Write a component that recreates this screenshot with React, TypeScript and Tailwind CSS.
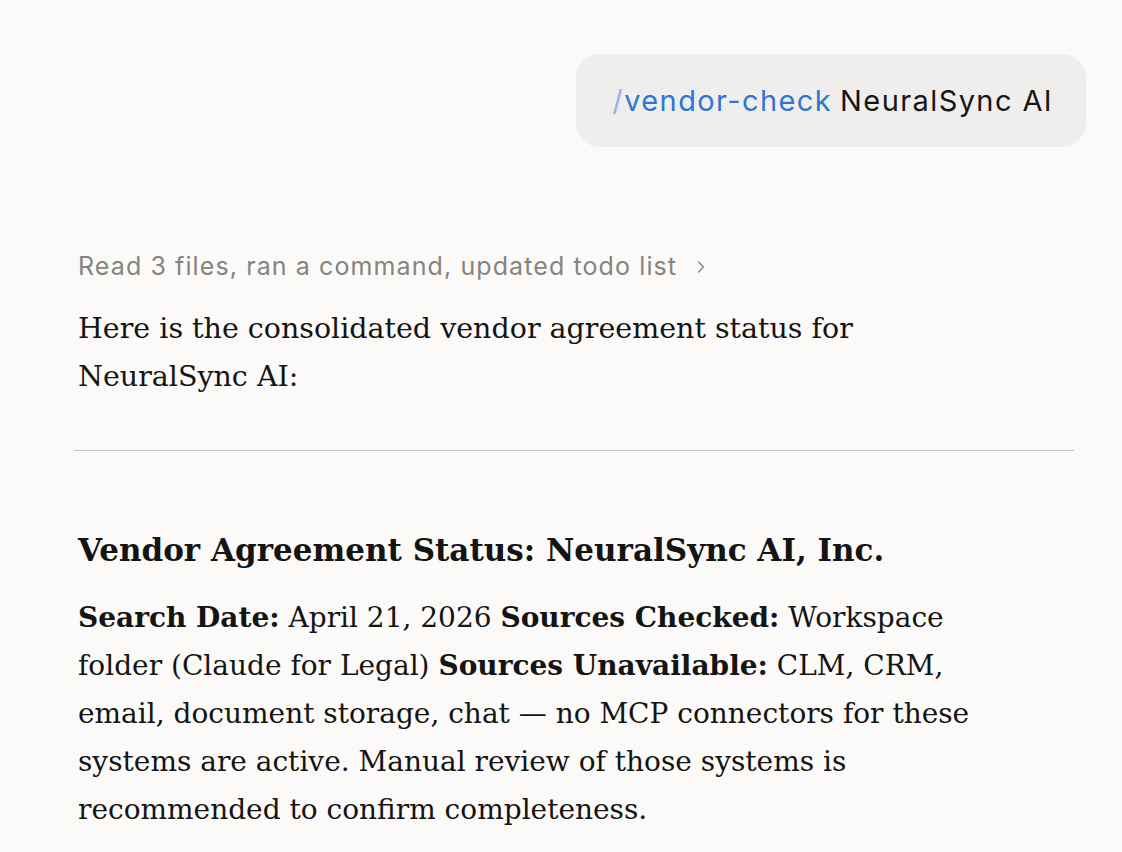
import { ChevronRight } from "lucide-react";

const serif = "font-['DejaVu_Serif',_'Liberation_Serif',_serif]";
const sans = "font-['Inter',_'Liberation_Sans',_sans-serif]";

export default function App() {
  return (
    <div className="min-h-[852px] w-[1122px] bg-[#fbfaf8] text-[#141413]">
      <div className="flex flex-col pl-[74px] pr-[36px] pt-[54px]">
        <div className="flex justify-end">
          <div
            className={`${sans} rounded-[24px] bg-[#efeeec] pl-[36px] pr-[33px] h-[93px] flex items-center text-[29px] tracking-[1.4px]`}
          >
            <span className="text-[#93b4e6]">/</span>
            <span className="text-[#2f76d2]">vendor-check</span>
            <span className="ml-[8px] text-[#161616]">NeuralSync AI</span>
          </div>
        </div>

        <div className="mt-[104px] pl-[4px] pr-[12px]">
          <div className={`${sans} flex items-center gap-[14px] text-[25px] tracking-[1.1px] text-[#85847f] h-[32px]`}>
            <span>Read 3 files, ran a command, updated todo list</span>
            <ChevronRight size={20} strokeWidth={1.5} />
          </div>
          <p className={`${serif} mt-[22px] text-[28.5px] leading-[48px] max-w-[800px]`}>
            Here is the consolidated vendor agreement status for NeuralSync AI:
          </p>
        </div>

        <hr className="mt-[49px] border-t border-[#c9c8c3] w-[1000px]" />

        <div className="pl-[4px] pr-[12px]">
          <h2 className={`${serif} mt-[75px] text-[31px] font-bold leading-[48px]`}>
            Vendor Agreement Status: NeuralSync AI, Inc.
          </h2>
          <p className={`${serif} mt-[20px] text-[28px] leading-[48px] max-w-[955px]`}>
            <strong>Search Date:</strong> April 21, 2026 <strong>Sources Checked:</strong> Workspace
            folder (Claude for Legal) <strong>Sources Unavailable:</strong> CLM, CRM, email, document
            storage, chat — no MCP connectors for these systems are active. Manual review of those
            systems is recommended to confirm completeness.
          </p>
        </div>
      </div>
    </div>
  );
}
